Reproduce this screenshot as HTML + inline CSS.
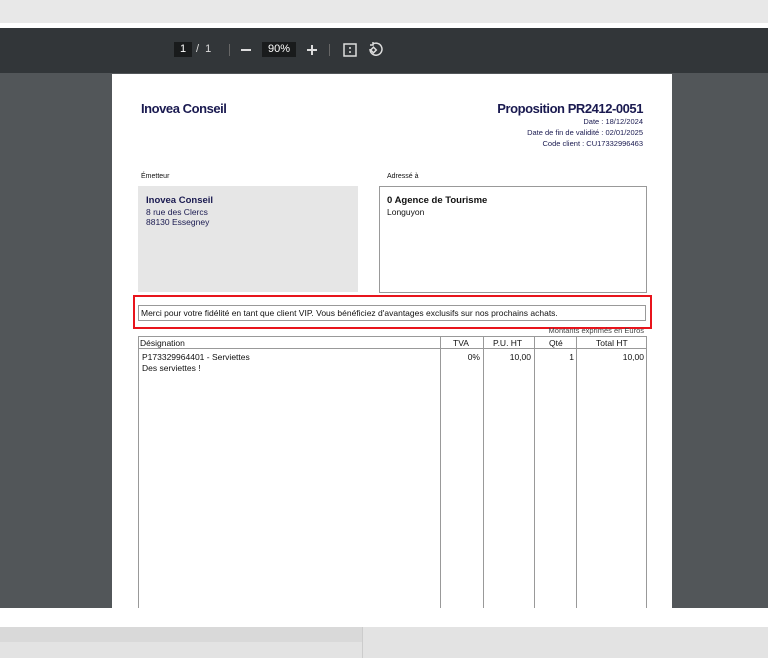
<!DOCTYPE html>
<html><head><meta charset="utf-8"><style>
*{margin:0;padding:0;box-sizing:border-box}
body{width:768px;height:658px;overflow:hidden;background:#fff;font-family:"Liberation Sans",Arial,sans-serif;position:relative}
.a{position:absolute}
.t{font-size:8.5px;color:#111;white-space:nowrap}
.n{color:#1a1a50}
</style></head><body>
<div class="a" style="left:0;top:0;width:768px;height:23px;background:#e8e8e8"></div>
<div class="a" style="left:0;top:28px;width:768px;height:45px;background:#323639"></div>
<div class="a" style="left:0;top:73px;width:768px;height:535px;background:#525659"></div>
<!-- toolbar -->
<div class="a" style="left:174px;top:42px;width:18px;height:15px;background:#191b1c;color:#fff;font-size:11px;text-align:center;line-height:15px">1</div>
<div class="a" style="left:196px;top:42px;color:#ddd;font-size:11px;line-height:15px">/&nbsp; 1</div>
<div class="a" style="left:229px;top:44px;width:1px;height:12px;background:#666"></div>
<div class="a" style="left:241px;top:49px;width:10px;height:2px;background:#ddd"></div>
<div class="a" style="left:262px;top:42px;width:34px;height:15px;background:#191b1c;color:#fff;font-size:11px;text-align:center;line-height:15px">90%</div>
<div class="a" style="left:307px;top:49px;width:10px;height:2px;background:#ddd"></div>
<div class="a" style="left:311px;top:45px;width:2px;height:10px;background:#ddd"></div>
<div class="a" style="left:329px;top:44px;width:1px;height:12px;background:#666"></div>
<svg class="a" style="left:342px;top:42px" width="16" height="16" viewBox="0 0 16 16" fill="none" stroke="#ddd" stroke-width="1.5"><rect x="2" y="2" width="12" height="12"/><path d="M8 5v2M8 9v2" /></svg>
<svg class="a" style="left:367px;top:41px" width="16" height="17" viewBox="0 0 16 17" fill="none" stroke="#ddd" stroke-width="1.5"><path d="M6 3 A6 6 0 1 1 3 8"/><path d="M6 1v3h-3"/><rect x="4.5" y="7" width="4" height="4" transform="rotate(45 6.5 9)"/></svg>
<!-- page -->
<div class="a" style="left:112px;top:74px;width:560px;height:534px;background:#fff"></div>
<div class="a t n" style="left:141px;top:101px;font-size:13px;font-weight:bold;letter-spacing:-0.45px">Inovea Conseil</div>
<div class="a t n" style="right:125px;top:101px;font-size:13px;font-weight:bold;letter-spacing:-0.45px">Proposition PR2412-0051</div>
<div class="a t n" style="right:125px;top:116px;font-size:7.5px;line-height:11px;text-align:right">Date : 18/12/2024<br>Date de fin de validité : 02/01/2025<br>Code client : CU17332996463</div>
<div class="a t" style="left:141px;top:173px;font-size:7px">Émetteur</div>
<div class="a t" style="left:387px;top:173px;font-size:7px">Adressé à</div>
<div class="a" style="left:138px;top:186px;width:220px;height:106px;background:#e6e6e6"></div>
<div class="a t n" style="left:146px;top:195px;line-height:10.5px"><b style="font-size:9.5px">Inovea Conseil</b><br>8 rue des Clercs<br>88130 Essegney</div>
<div class="a" style="left:379px;top:186px;width:268px;height:107px;border:1px solid #999"></div>
<div class="a t" style="left:387px;top:195px;line-height:10.5px"><b style="font-size:9.5px">0 Agence de Tourisme</b><br>Longuyon</div>
<div class="a" style="left:138px;top:305px;width:508px;height:16px;border:1px solid #999"></div>
<div class="a t" style="left:141px;top:308px">Merci pour votre fidélité en tant que client VIP. Vous bénéficiez d'avantages exclusifs sur nos prochains achats.</div>
<div class="a" style="left:133px;top:295px;width:519px;height:34px;border:2px solid #e8141c"></div>
<div class="a t" style="right:124px;top:326px;font-size:7.5px;color:#444">Montants exprimés en Euros</div>
<div class="a" style="left:138px;top:336px;width:509px;height:280px;border:1px solid #999"></div>
<div class="a" style="left:138px;top:348px;width:509px;height:1px;background:#999"></div>
<div class="a" style="left:440px;top:336px;width:1px;height:272px;background:#999"></div>
<div class="a" style="left:483px;top:336px;width:1px;height:272px;background:#999"></div>
<div class="a" style="left:534px;top:336px;width:1px;height:272px;background:#999"></div>
<div class="a" style="left:576px;top:336px;width:1px;height:272px;background:#999"></div>
<div class="a t" style="left:140px;top:338px">Désignation</div>
<div class="a t" style="left:453px;top:338px">TVA</div>
<div class="a t" style="left:493px;top:338px">P.U. HT</div>
<div class="a t" style="left:549px;top:338px">Qté</div>
<div class="a t" style="left:596px;top:338px">Total HT</div>
<div class="a t" style="left:142px;top:352px;line-height:11px">P173329964401 - Serviettes<br>Des serviettes !</div>
<div class="a t" style="right:288px;top:352px">0%</div>
<div class="a t" style="right:237px;top:352px">10,00</div>
<div class="a t" style="right:194px;top:352px">1</div>
<div class="a t" style="right:124px;top:352px">10,00</div>
<!-- bottom -->
<div class="a" style="left:0;top:608px;width:768px;height:19px;background:#fff"></div>
<div class="a" style="left:0;top:627px;width:362px;height:15px;background:#d9d9d9"></div>
<div class="a" style="left:0;top:642px;width:362px;height:16px;background:#e3e3e3"></div>
<div class="a" style="left:362px;top:627px;width:406px;height:31px;background:#e3e3e3;border-left:1px solid #ccc"></div>
</body></html>
